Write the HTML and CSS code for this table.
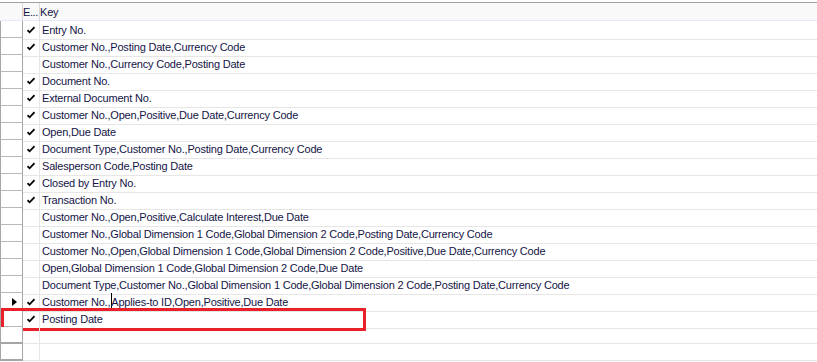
FILE: index.html
```html
<!DOCTYPE html>
<html>
<head>
<meta charset="utf-8">
<link rel="stylesheet" href="styles.css">
</head>
<body>
<div class="grid">
  <div class="hdr">
    <div class="rh"></div>
    <div class="ce">E...</div>
    <div class="ck">Key</div>
  </div>
  <div class="row"><div class="rh"></div><div class="ce"><svg class="chk" viewBox="0 0 8 8"><path d="M0.5 4.2 L2.6 6.3 L7.5 1.2" /></svg></div><div class="ck">Entry No.</div></div>
  <div class="row"><div class="rh"></div><div class="ce"><svg class="chk" viewBox="0 0 8 8"><path d="M0.5 4.2 L2.6 6.3 L7.5 1.2" /></svg></div><div class="ck">Customer No.,Posting Date,Currency Code</div></div>
  <div class="row"><div class="rh"></div><div class="ce"></div><div class="ck">Customer No.,Currency Code,Posting Date</div></div>
  <div class="row"><div class="rh"></div><div class="ce"><svg class="chk" viewBox="0 0 8 8"><path d="M0.5 4.2 L2.6 6.3 L7.5 1.2" /></svg></div><div class="ck">Document No.</div></div>
  <div class="row"><div class="rh"></div><div class="ce"><svg class="chk" viewBox="0 0 8 8"><path d="M0.5 4.2 L2.6 6.3 L7.5 1.2" /></svg></div><div class="ck">External Document No.</div></div>
  <div class="row"><div class="rh"></div><div class="ce"><svg class="chk" viewBox="0 0 8 8"><path d="M0.5 4.2 L2.6 6.3 L7.5 1.2" /></svg></div><div class="ck">Customer No.,Open,Positive,Due Date,Currency Code</div></div>
  <div class="row"><div class="rh"></div><div class="ce"><svg class="chk" viewBox="0 0 8 8"><path d="M0.5 4.2 L2.6 6.3 L7.5 1.2" /></svg></div><div class="ck">Open,Due Date</div></div>
  <div class="row"><div class="rh"></div><div class="ce"><svg class="chk" viewBox="0 0 8 8"><path d="M0.5 4.2 L2.6 6.3 L7.5 1.2" /></svg></div><div class="ck">Document Type,Customer No.,Posting Date,Currency Code</div></div>
  <div class="row"><div class="rh"></div><div class="ce"><svg class="chk" viewBox="0 0 8 8"><path d="M0.5 4.2 L2.6 6.3 L7.5 1.2" /></svg></div><div class="ck">Salesperson Code,Posting Date</div></div>
  <div class="row"><div class="rh"></div><div class="ce"><svg class="chk" viewBox="0 0 8 8"><path d="M0.5 4.2 L2.6 6.3 L7.5 1.2" /></svg></div><div class="ck">Closed by Entry No.</div></div>
  <div class="row"><div class="rh"></div><div class="ce"><svg class="chk" viewBox="0 0 8 8"><path d="M0.5 4.2 L2.6 6.3 L7.5 1.2" /></svg></div><div class="ck">Transaction No.</div></div>
  <div class="row"><div class="rh"></div><div class="ce"></div><div class="ck">Customer No.,Open,Positive,Calculate Interest,Due Date</div></div>
  <div class="row"><div class="rh"></div><div class="ce"></div><div class="ck">Customer No.,Global Dimension 1 Code,Global Dimension 2 Code,Posting Date,Currency Code</div></div>
  <div class="row"><div class="rh"></div><div class="ce"></div><div class="ck">Customer No.,Open,Global Dimension 1 Code,Global Dimension 2 Code,Positive,Due Date,Currency Code</div></div>
  <div class="row"><div class="rh"></div><div class="ce"></div><div class="ck">Open,Global Dimension 1 Code,Global Dimension 2 Code,Due Date</div></div>
  <div class="row"><div class="rh"></div><div class="ce"></div><div class="ck">Document Type,Customer No.,Global Dimension 1 Code,Global Dimension 2 Code,Posting Date,Currency Code</div></div>
  <div class="row"><div class="rh"><span class="tri"></span></div><div class="ce"><svg class="chk" viewBox="0 0 8 8"><path d="M0.5 4.2 L2.6 6.3 L7.5 1.2" /></svg></div><div class="ck">Customer No.,<span class="caret"></span>Applies-to ID,Open,Positive,Due Date</div></div>
  <div class="row hl"><div class="rh"></div><div class="ce"><svg class="chk" viewBox="0 0 8 8"><path d="M0.5 4.2 L2.6 6.3 L7.5 1.2" /></svg></div><div class="ck">Posting Date</div><span class="redbox"></span></div>
  <div class="row empty"><div class="rh"></div><div class="ce"></div><div class="ck"></div></div>
  <div class="row empty"><div class="rh"></div><div class="ce"></div><div class="ck"></div></div>
</div>
</body>
</html>
```
FILE: styles.css
```css
html, body {
  margin: 0;
  padding: 0;
  background: #ffffff;
  overflow: hidden;
}
body {
  font-family: "Liberation Sans", Arial, sans-serif;
  font-size: 11px;
  letter-spacing: -0.2px;
  color: #141446;
  width: 817px;
  height: 362px;
}
.grid {
  margin-top: 2px;
  border-top: 1px solid #a0a0a0;
  display: flex;
  flex-direction: column;
}
.hdr {
  display: grid;
  grid-template-columns: 23px 17px 1fr;
  height: 17px;
  background: #f9f9f9;
  border-bottom: 1px solid #e3e9f7;
}
.hdr .rh {
  border-right: 1px solid #d8d8d8;
}
.hdr .ce {
  border-right: 1px solid #d8d8d8;
  line-height: 18px;
  letter-spacing: -0.4px;
}
.hdr .ck {
  line-height: 18px;
}
.row {
  display: grid;
  grid-template-columns: 23px 17px 1fr;
  height: 17px;
  position: relative;
}
.row .rh {
  background: #ffffff;
  border-left: 1px solid #a6a6a6;
  border-right: 1px solid #a6a6a6;
  border-bottom: 1px solid #b8b8b8;
  box-sizing: border-box;
  height: 17px;
  display: flex;
  align-items: center;
}
.row.empty .rh {
  border-bottom: 2px solid #a6a6a6;
}
.row .ce {
  border-right: 1px solid #e6e6e6;
  border-bottom: 1px solid #e6e6e6;
  box-sizing: border-box;
  display: flex;
  align-items: center;
  justify-content: center;
}
.row .ck {
  border-bottom: 1px solid #e6e6e6;
  box-sizing: border-box;
  line-height: 18px;
  padding-left: 2px;
  white-space: nowrap;
}
.chk {
  width: 8px;
  height: 8px;
  margin-left: -1px;
}
.chk path {
  fill: none;
  stroke: #000000;
  stroke-width: 1.8;
}
.tri {
  width: 0;
  height: 0;
  margin-left: 11px;
  margin-top: 1px;
  border-top: 4px solid transparent;
  border-bottom: 4px solid transparent;
  border-left: 5px solid #000000;
}
.caret {
  display: inline-block;
  position: relative;
  width: 0;
  height: 1px;
  margin-left: 1px;
}
.caret::after {
  content: "";
  position: absolute;
  left: 0;
  top: -12px;
  width: 1px;
  height: 16px;
  background: #000000;
}
.redbox {
  position: absolute;
  left: 1px;
  top: -2px;
  width: 365px;
  height: 23px;
  border: 3px solid #e8202a;
  box-sizing: border-box;
  pointer-events: none;
}
```
